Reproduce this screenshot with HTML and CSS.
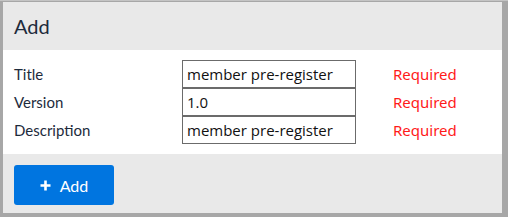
FILE: index.html
```html
<!DOCTYPE html>
<html lang="en">
<head>
    <meta charset="UTF-8">
    <title>Add</title>
    <link rel="stylesheet" href="styles.css">
</head>
<body>
    <div class="modal">
        <div class="modal-header">
            <h2 class="modal-title">Add</h2>
        </div>

        <div class="modal-body">
            <div class="form-row">
                <label class="form-label">Title</label>
                <input class="form-input" type="text" value="member pre-register">
                <span class="form-error">Required</span>
            </div>
            <div class="form-row">
                <label class="form-label">Version</label>
                <input class="form-input" type="text" value="1.0">
                <span class="form-error">Required</span>
            </div>
            <div class="form-row">
                <label class="form-label">Description</label>
                <input class="form-input" type="text" value="member pre-register">
                <span class="form-error">Required</span>
            </div>
        </div>

        <div class="modal-footer">
            <button class="btn-add" type="button">
                <svg class="btn-icon" width="11" height="11" viewBox="0 0 11 11">
                    <path d="M5.5 0.5v10M0.5 5.5h10" stroke="#fff" stroke-width="2.6"/>
                </svg>
                Add
            </button>
        </div>
    </div>
</body>
</html>
```

FILE: styles.css
```css
body {
    margin: 0;
    padding: 1px 6px 4px 3px;

    background-color: #a7a7a7;
    border-top: 1px solid #c4c4c4;

    font-family: Lato, "Noto Sans", sans-serif;
}

.modal {
    display: flex;
    flex-direction: column;
    height: 211px;

    background-color: #fff;
}

.modal-header {
    flex-shrink: 0;
    height: 48px;
    padding: 0 11px;

    display: flex;
    align-items: center;

    background-color: #e9e9e9;
}

.modal-title {
    margin: 0;

    font-size: 20px;
    font-weight: normal;
    color: #1d2b3c;
}

.modal-body {
    flex-shrink: 0;
    padding: 10px 11px;
}

.form-row {
    height: 28px;

    display: flex;
    align-items: center;
}

.form-label {
    width: 168px;

    font-size: 15px;
    color: #1d2b3c;
}

.form-input {
    width: 174px;
    height: 28px;
    margin: 0;
    padding: 0 4px;
    box-sizing: border-box;

    border: 1px solid #6b6b6b;
    border-radius: 0;

    font-family: "Open Sans", sans-serif;
    font-size: 15px;
    color: #111;
}

.form-error {
    margin-left: 37px;

    font-family: "Noto Sans", sans-serif;
    font-size: 15px;
    color: #ff1a1a;
}

.modal-footer {
    flex-grow: 1;
    padding: 11px 11px 0;

    background-color: #e9e9e9;
}

.btn-add {
    width: 100px;
    height: 40px;

    display: flex;
    align-items: center;
    justify-content: center;
    gap: 9px;

    background-color: #0075e0;
    border: none;
    border-radius: 3px;

    font-family: Lato, sans-serif;
    font-size: 16px;
    color: #fff;
}
```
